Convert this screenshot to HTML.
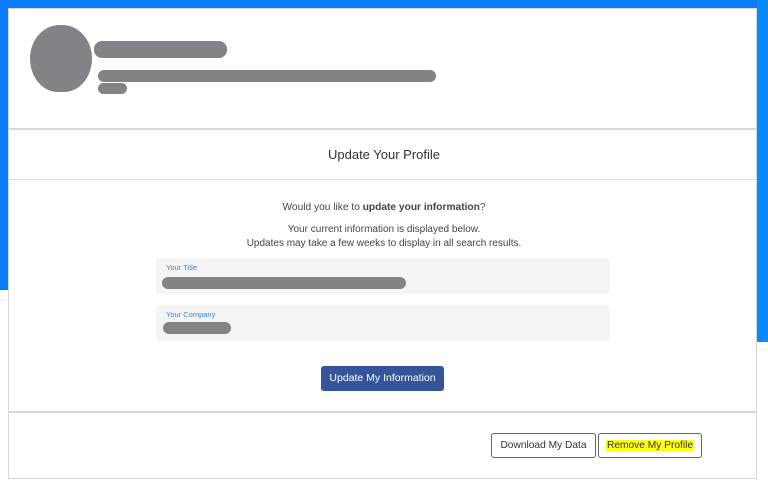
<!DOCTYPE html>
<html><head><style>
body{margin:0;width:768px;height:492px;position:relative;background:#fff;font-family:"Liberation Sans",sans-serif;overflow:hidden}
.bl{position:absolute;background:#0a7cf8}
.card{position:absolute;left:8px;top:8px;width:749px;height:471px;background:#fff;border:1px solid #d6d6d6;box-sizing:border-box}
.hr{position:absolute;left:8px;width:749px;height:1px;background:#d8d8d8}
.g{position:absolute;background:#828387;border-radius:8px}
.t{position:absolute;left:0;width:768px;text-align:center;color:#444;font-size:10px}
.f{position:absolute;left:156px;width:454px;background:#f4f4f4;border-radius:4px}
.f span{position:absolute;left:10px;top:5px;font-size:7.5px;color:#2a8fe0}
.btn{position:absolute;border:1px solid #666;border-radius:3px;font-size:10.2px;color:#333;text-align:center;line-height:23px;background:#fff}
</style></head><body>
<div class="bl" style="left:0;top:0;width:768px;height:8px"></div>
<div class="bl" style="left:0;top:0;width:8px;height:290px"></div>
<div class="bl" style="left:757px;top:0;width:11px;height:342px;background:#0a8af8"></div>
<div class="card"></div>
<div class="g" style="left:30px;top:25px;width:62px;height:67px;border-radius:48% 48% 45% 45%/50%"></div>
<div class="g" style="left:94px;top:41px;width:133px;height:17px"></div>
<div class="g" style="left:98px;top:70px;width:338px;height:12px;border-radius:6px"></div>
<div class="g" style="left:98px;top:83px;width:29px;height:11px;border-radius:6px"></div>
<div class="hr" style="top:128px;height:2px"></div>
<div class="t" style="top:147px;font-size:13px;color:#333">Update Your Profile</div>
<div class="hr" style="top:179px"></div>
<div class="t" style="top:202px;font-size:10.2px">Would you like to <b>update your information</b>?</div>
<div class="t" style="top:224px">Your current information is displayed below.</div>
<div class="t" style="top:238px">Updates may take a few weeks to display in all search results.</div>
<div class="f" style="top:258px;height:36px"><span>Your Title</span><div class="g" style="left:6px;top:19px;width:244px;height:12px;border-radius:6px"></div></div>
<div class="f" style="top:305px;height:36px"><span>Your Company</span><div class="g" style="left:7px;top:17px;width:68px;height:12px;border-radius:6px"></div></div>
<div style="position:absolute;left:321px;top:366px;width:123px;height:25px;background:#34559a;border-radius:3px;color:#fff;font-size:10.5px;text-align:center;line-height:25px">Update My Information</div>
<div class="hr" style="top:411px;height:2px"></div>
<div class="btn" style="left:491px;top:433px;width:103px">Download My Data</div>
<div class="btn" style="left:598px;top:433px;width:102px"><span style="background:#ffff14;padding:0 1px">Remove My Profile</span></div>
</body></html>
